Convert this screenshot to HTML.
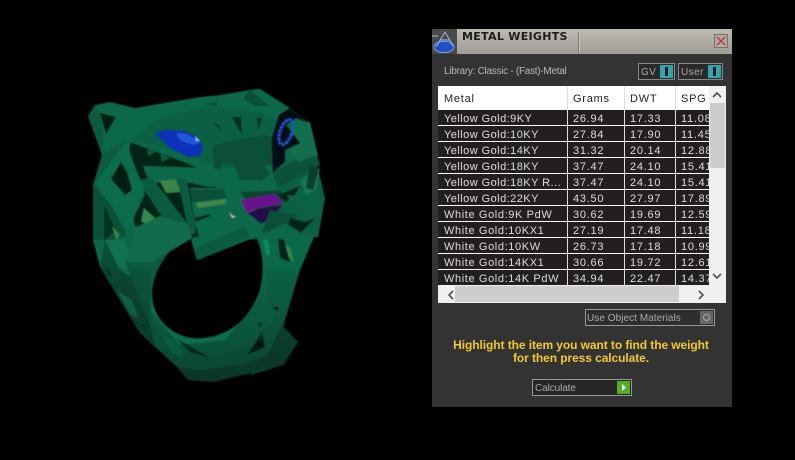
<!DOCTYPE html>
<html><head><meta charset="utf-8"><style>
html,body{margin:0;padding:0;background:#000;width:795px;height:460px;overflow:hidden}
.a{position:absolute}
#p{position:absolute;left:432px;top:29px;width:300px;height:378px;background:#333}
.t{position:absolute;font:11px "Liberation Sans",sans-serif;letter-spacing:.75px;white-space:nowrap;color:#ddd;line-height:16px;overflow:hidden}
.y{letter-spacing:.45px}
.w{letter-spacing:.62px}
.r{position:absolute;left:438px;width:271px;height:15px;background:#231f20}
.v{position:absolute;width:1px;background:#ddd;top:86px;height:199px}
</style></head><body>
<svg class="a" style="left:0;top:0" width="430" height="460" viewBox="0 0 430 460">
<defs><filter id="b"><feGaussianBlur stdDeviation=".6"/></filter>
<linearGradient id="g" x1="0" y1="240" x2="0" y2="385" gradientUnits="userSpaceOnUse"><stop offset="0" stop-color="#000" stop-opacity="0"/><stop offset="1" stop-color="#000" stop-opacity=".35"/></linearGradient></defs>
<g filter="url(#b)" opacity=".86">
<path fill="#0e7a55" d="M88 116L95 105 110 102 135 108 200 97 220 95 250 90 260 89 290 108 307 122 325 198 315 235 300 270 283 327 298 342 283 365 213 382 188 380 177 367 140 333 100 267 93 240 93 185 102 155Z"/>
<!-- band shading -->
<path fill="#0b6145" d="M177 367L188 380 213 382 283 365 298 342 290 335 275 352 240 365 200 370Z"/>
<path fill="#0a5a40" d="M100 267L140 333 155 345 150 325 142 290 125 262 105 240Z"/>
<path fill="#12855d" d="M104 238L125 240 137 280 120 270Z"/>
<path fill="#074a34" d="M103 263L113 275 108 277Z"/>
<path fill="#12855d" d="M118 292L132 300 138 318 130 314Z"/>
<path fill="#10805a" d="M152 290L158 320 180 337 213 338 240 327 260 293 263 260 270 262 283 290 272 322 245 345 213 358 180 352 160 335 148 310Z"/>
<path fill="#0c6a4b" d="M125 262L152 232 190 233 163 260 152 290 150 325 138 295Z"/>
<path fill="#128f64" d="M162 337L172 340 182 350 182 358 172 352Z"/>
<path fill="#06402e" d="M176 338L210 358 190 352Z"/>
<path fill="#042a1e" d="M247 355L262 333 265 347Z"/>
<path fill="#042a1e" d="M272 308L279 305 278 311Z"/>
<path fill="#042a1e" d="M258 324L262 322 260 328Z"/>
<path fill="#042a1e" d="M282 283L286 286 283 288Z"/>
<path fill="#0a5c42" d="M282 325L298 342 283 365 250 375 270 350Z"/>
<!-- hole -->
<path fill="#000" d="M190 233C172 245 155 265 152 290C150 312 165 333 190 338C222 342 250 322 260 290C265 270 263 252 257 238L247 240 197 260 192 243Z"/>
<path fill="#0c6b4c" d="M192 243L240 222 250 236 197 260Z"/>
<path fill="#0e7a55" d="M192 238L250 218 247 226 194 248Z"/>
<!-- ear -->
<path fill="#032218" d="M100 113L116 117 106 134Z"/>
<path fill="#0b6a4b" d="M88 116L95 105 102 120 104 155 102 155Z"/>
<!-- forehead -->
<path fill="#0c7050" d="M130 140L160 118 205 107 260 112 285 125 274 165 240 170 210 165 180 150 150 145Z"/>
<path fill="#0f7a55" d="M130 140L128 130 160 112 210 103 255 100 260 112 205 107 160 118Z"/>
<path fill="#05362a" d="M232 117L241 117 242 135 238 128Z"/>
<path fill="#05362a" d="M257 118L262 118 258 131Z"/>
<path fill="#05362a" d="M213 123L219 125 221 130Z"/>
<path fill="#0a5c42" d="M213 145L265 135 280 140 272 166 262 172 222 162 222 178 214 170Z"/>
<!-- inner cage -->
<path fill="#04291e" d="M130 142L184 162 216 176 216 232 185 240 135 226 128 190Z"/>
<path fill="#0c6a4b" d="M147 147L155 152 148 156ZM160 153L170 158 162 162Z"/>
<path fill="#0f7a55" d="M143 166L210 168 262 172 264 186 210 187 176 180 150 184Z"/>
<path fill="#3f9b55" d="M160 181L176 179 181 192 166 193Z"/>
<path fill="#0c6b4c" d="M138 180L152 178 194 232 184 242 160 214Z"/>
<path fill="#3d9f55" d="M144 208L156 219 148 226 141 221Z"/>
<path fill="#0c6b4c" d="M177 178L187 180 196 232 190 236Z"/>
<path fill="#127e58" d="M135 228L160 216 188 224 192 238 152 262 128 262Z"/>
<path fill="#0e7a55" d="M190 188L236 188 238 212 195 226Z"/>
<path fill="#0a5c42" d="M190 190L224 189 226 198 192 202Z"/>
<path fill="#4a9d55" d="M196 203L226 199 226 204 198 208Z"/>
<path fill="#042a1e" d="M194 218L210 214 212 228 200 232Z"/>
<path fill="#4e9e50" d="M204 220L212 222 208 226Z"/>
<!-- left rhombus -->
<path fill="#0c6d4d" d="M93 185L102 155 125 140 135 170 145 195 125 235 108 205Z"/>
<path fill="#0f7f58" d="M95 183L126 142 136 170 145 190 128 232 110 205Z"/>
<path fill="#032218" d="M121 162L127 172 132 190 125 195 111 179Z"/>
<path fill="#0a5f43" d="M93 185L112 206 126 236 112 240 93 240Z"/>
<path fill="#063b2a" d="M104 205L116 230 104 241Z"/>
<path fill="#3d9b50" d="M112 226L120 235 116 240Z"/>
<!-- snout -->
<path fill="#0f7a55" d="M212 170L270 165 281 205 248 226 200 240 195 222 236 206 232 190Z"/>
<path fill="#0a5c42" d="M234 166L262 163 270 174 262 180 240 180Z"/>
<path fill="#084f39" d="M240 192L286 190 283 208 270 222 250 205Z"/>
<!-- mouth -->
<path fill="#7a14a8" d="M241 200L275 194 283 204 260 207 247 213Z"/>
<path fill="#2a0a56" d="M248 213L258 209 282 205 268 220 261 224Z"/>
<path fill="#d8d8b8" d="M229 212L232 215 236 217 232 218Z"/>
<!-- right cheek facets -->
<path fill="#0c6f4e" d="M281 170L312 150 325 198 318 238 290 226 274 230 262 232 282 207Z"/>
<path fill="#042a1e" d="M278 195L305 184 300 186 294 196 285 202Z"/>
<path fill="#0b5f44" d="M272 172L316 150 320 165 300 176 278 188Z"/>
<path fill="#128a5f" d="M300 180L320 168 316 190 306 196Z"/>
<path fill="#084a35" d="M310 165L319 168 313 190 306 188Z"/>
<path fill="#0c7250" d="M286 195L322 198 318 220 298 208Z"/>
<path fill="#12815a" d="M296 120L310 122 318 155 298 162 290 152Z"/>
<path fill="#0a5c42" d="M270 210L296 215 300 232 282 236 262 232Z"/>
<path fill="#042a1e" d="M290 218L305 222 315 218 300 234 288 230Z"/>
<path fill="#0e7a55" d="M262 235L285 223 300 232 302 252 284 310 268 303 265 262Z"/>
<path fill="#10a070" d="M263 240L268 240 270 256 266 254Z"/>
<path fill="#3d9b50" d="M280 242L290 247 294 262 286 255Z"/>
<path fill="#042a1e" d="M278 238L284 240 290 262 280 258Z"/>
<!-- top facets -->
<path fill="#0a5c42" d="M250 90L262 100 270 106 255 106 243 99Z"/>
<path fill="#0a5c42" d="M204 104L218 102 216 107Z"/>
<path fill="url(#g)" d="M100 267L140 333 177 367 188 380 213 382 283 365 298 342 283 327 300 270 262 270 258 300 225 340 180 345 150 310 150 270Z"/>
</g>
<g filter="url(#b)">
<!-- eye -->
<path fill="#020a12" d="M273 172L272 138 279 115 290 108 307 122 296 118 286 125 300 143 285 150 285 162Z"/>
<ellipse cx="286" cy="132" rx="6" ry="13" transform="rotate(20 286 132)" fill="none" stroke="#1d55c8" stroke-width="3" stroke-dasharray="3 1"/>
<!-- sapphire -->
<path fill="#0b32b8" d="M155 133L165 130 185 131 198 137 203 147 200 156 188 157 170 148Z"/>
<path fill="#2058d8" d="M176 133L188 134 200 143 194 145 181 141Z"/>
<path fill="#9ab8ee" d="M195 136L200 141 196 141Z"/>
</g>
</svg>

<div id="p">
<div class="a" style="left:0;top:0;width:25px;height:25px;background:#4a4a48"></div>
<svg class="a" style="left:0;top:0" width="25" height="25" viewBox="0 0 25 25"><ellipse cx="12" cy="18" rx="10" ry="5.5" fill="#1f4fc0" stroke="#6f9cf0"/><path d="M13 3L4 18M13 3L21 17M8 11H18" stroke="#9db8e8" stroke-width="1" fill="none"/><path d="M0 7H6" stroke="#bbb"/></svg>
<div class="a" style="left:25px;top:0;width:275px;height:25px;background:linear-gradient(#bdbab1,#a09d94)"></div>
<div class="a" style="left:146px;top:3px;width:1px;height:21px;background:#7a7870"></div>
<div class="a" style="left:147px;top:3px;width:1px;height:21px;background:#c8c6bd"></div>
<div class="a" style="left:30px;top:0;font:bold 11px 'DejaVu Sans',sans-serif;letter-spacing:.3px;color:#1d1d1d;line-height:15px;white-space:nowrap">METAL WEIGHTS</div>
<div class="a" style="left:282px;top:5px;width:12px;height:12px;border:1px solid #77746e;background:#b9a69e"></div>
<svg class="a" style="left:282px;top:5px" width="14" height="14"><path d="M3 3L11 11M11 3L3 11" stroke="#a83030" stroke-width="1.2"/></svg>
</div>

<div class="a" style="left:444px;top:66px;font:10px 'Liberation Sans',sans-serif;color:#b8b8b8;line-height:12px;white-space:nowrap;letter-spacing:-.28px">Library: Classic - (Fast)-Metal</div>
<div class="a" style="left:638px;top:63px;width:35px;height:15px;border:1px solid #7f8c8c;background:#2a2a2a"></div>
<div class="t" style="left:641px;top:65px;font-size:10px;color:#aaa;letter-spacing:.4px">GV</div>
<div class="a" style="left:660px;top:65px;width:13px;height:13px;background:#36a3ad"></div>
<div class="a" style="left:665px;top:67px;width:3px;height:9px;background:#122"></div>
<div class="a" style="left:678px;top:63px;width:43px;height:15px;border:1px solid #7f8c8c;background:#2a2a2a"></div>
<div class="t" style="left:681px;top:65px;font-size:10px;color:#aaa;letter-spacing:.4px">User</div>
<div class="a" style="left:708px;top:65px;width:13px;height:13px;background:#36a3ad"></div>
<div class="a" style="left:713px;top:67px;width:3px;height:9px;background:#122"></div>

<div class="a" style="left:438px;top:86px;width:288px;height:217px;background:#fff"></div>
<div class="r" style="top:110px"></div><div class="r" style="top:126px"></div><div class="r" style="top:142px"></div><div class="r" style="top:158px"></div><div class="r" style="top:174px"></div><div class="r" style="top:190px"></div><div class="r" style="top:206px"></div><div class="r" style="top:222px"></div><div class="r" style="top:238px"></div><div class="r" style="top:254px"></div><div class="r" style="top:270px"></div>
<div class="v" style="left:567px"></div><div class="v" style="left:624px"></div><div class="v" style="left:675px"></div>
<div class="a" style="left:438px;top:285px;width:288px;height:18px;background:#f0f0f0"></div>
<div class="a" style="left:709px;top:86px;width:17px;height:199px;background:#f0f0f0"></div>
<div class="a" style="left:710px;top:103px;width:15px;height:65px;background:#cdcdcd"></div>
<div class="a" style="left:455px;top:286px;width:224px;height:16px;background:#cdcdcd"></div>
<svg class="a" style="left:438px;top:86px" width="288" height="217" fill="none" stroke="#505050" stroke-width="1.6"><path d="M275 11L279 7 283 11M275 188L279 192 283 188M15 205L11 209 15 213M261 205L265 209 261 213"/></svg>

<div class="t" style="left:444px;top:91px;color:#222">Metal</div><div class="t" style="left:573px;top:91px;color:#222">Grams</div><div class="t" style="left:630px;top:91px;color:#222">DWT</div><div class="t" style="left:681px;top:91px;color:#222">SPG</div>

<div class="t y" style="left:444px;top:111px">Yellow Gold:9KY</div><div class="t" style="left:573px;top:111px">26.94</div><div class="t" style="left:630px;top:111px">17.33</div><div class="t" style="left:681px;top:111px;width:28px">11.08</div>
<div class="t y" style="left:444px;top:127px">Yellow Gold:10KY</div><div class="t" style="left:573px;top:127px">27.84</div><div class="t" style="left:630px;top:127px">17.90</div><div class="t" style="left:681px;top:127px;width:28px">11.45</div>
<div class="t y" style="left:444px;top:143px">Yellow Gold:14KY</div><div class="t" style="left:573px;top:143px">31.32</div><div class="t" style="left:630px;top:143px">20.14</div><div class="t" style="left:681px;top:143px;width:28px">12.88</div>
<div class="t y" style="left:444px;top:159px">Yellow Gold:18KY</div><div class="t" style="left:573px;top:159px">37.47</div><div class="t" style="left:630px;top:159px">24.10</div><div class="t" style="left:681px;top:159px;width:28px">15.41</div>
<div class="t y" style="left:444px;top:175px">Yellow Gold:18KY R...</div><div class="t" style="left:573px;top:175px">37.47</div><div class="t" style="left:630px;top:175px">24.10</div><div class="t" style="left:681px;top:175px;width:28px">15.41</div>
<div class="t y" style="left:444px;top:191px">Yellow Gold:22KY</div><div class="t" style="left:573px;top:191px">43.50</div><div class="t" style="left:630px;top:191px">27.97</div><div class="t" style="left:681px;top:191px;width:28px">17.89</div>
<div class="t w" style="left:444px;top:207px">White Gold:9K PdW</div><div class="t" style="left:573px;top:207px">30.62</div><div class="t" style="left:630px;top:207px">19.69</div><div class="t" style="left:681px;top:207px;width:28px">12.59</div>
<div class="t w" style="left:444px;top:223px">White Gold:10KX1</div><div class="t" style="left:573px;top:223px">27.19</div><div class="t" style="left:630px;top:223px">17.48</div><div class="t" style="left:681px;top:223px;width:28px">11.18</div>
<div class="t w" style="left:444px;top:239px">White Gold:10KW</div><div class="t" style="left:573px;top:239px">26.73</div><div class="t" style="left:630px;top:239px">17.18</div><div class="t" style="left:681px;top:239px;width:28px">10.99</div>
<div class="t w" style="left:444px;top:255px">White Gold:14KX1</div><div class="t" style="left:573px;top:255px">30.66</div><div class="t" style="left:630px;top:255px">19.72</div><div class="t" style="left:681px;top:255px;width:28px">12.61</div>
<div class="t w" style="left:444px;top:271px;height:14px">White Gold:14K PdW</div><div class="t" style="left:573px;top:271px;height:14px">34.94</div><div class="t" style="left:630px;top:271px;height:14px">22.47</div><div class="t" style="left:681px;top:271px;width:28px;height:14px">14.37</div>

<div class="a" style="left:585px;top:309px;width:128px;height:15px;border:1px solid #999;background:#2e2e2e"></div>
<div class="t" style="left:587px;top:311px;font-size:10px;color:#aaa;letter-spacing:.05px">Use Object Materials</div>
<div class="a" style="left:700px;top:311px;width:13px;height:13px;background:#666"></div>
<div class="a" style="left:703px;top:314px;width:5px;height:5px;border:1px solid #aaa;border-radius:50%"></div>

<div class="a" style="left:432px;top:339px;width:298px;text-align:center;font:bold 12px/13px 'Liberation Sans',sans-serif;color:#f2c92e;letter-spacing:-.08px">Highlight the item you want to find the weight<br>for then press calculate.</div>

<div class="a" style="left:532px;top:379px;width:98px;height:15px;border:1px solid #999;background:#262626"></div>
<div class="t" style="left:535px;top:381px;font-size:10px;color:#aaa;letter-spacing:-.1px">Calculate</div>
<div class="a" style="left:617px;top:381px;width:13px;height:13px;background:#53ac2a"></div>
<svg class="a" style="left:617px;top:381px" width="13" height="13"><path d="M5 3L9 6.5 5 10Z" fill="#eee"/></svg>
</body></html>
